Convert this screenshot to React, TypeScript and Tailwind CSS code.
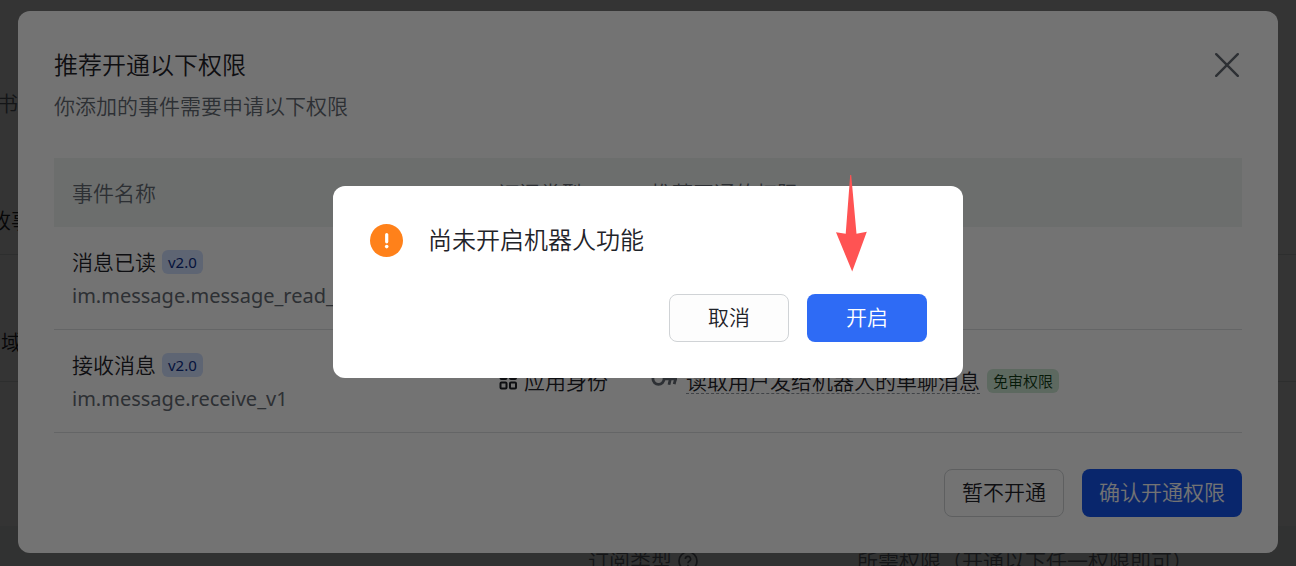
import { ReactNode } from "react";

const events = [
  {
    name: "消息已读",
    version: "v2.0",
    key: "im.message.message_read_v1",
  },
  {
    name: "接收消息",
    version: "v2.0",
    key: "im.message.receive_v1",
    subscription: "应用身份",
    permission: "读取用户发给机器人的单聊消息",
    tag: "免审权限",
  },
];

function AppsIcon() {
  return (
    <svg viewBox="0 0 20 18" className="h-[18px] w-5 shrink-0" fill="none" stroke="#1f2329" strokeWidth="2">
      <rect x="2.5" y="1" width="6" height="6" rx="1" />
      <rect x="12" y="1" width="6" height="6" rx="1" />
      <rect x="2.5" y="10.5" width="6" height="6" rx="1" />
      <rect x="12" y="10.5" width="6" height="6" rx="1" />
    </svg>
  );
}

function KeyIcon() {
  return (
    <svg viewBox="0 0 27 18" className="h-[18px] w-[27px] shrink-0" fill="none" stroke="#646a73" strokeWidth="2.8">
      <circle cx="7.5" cy="6.8" r="5.6" />
      <path d="M13 6.8h13M19.4 6.8l-1.4 6M24.6 6.8l-1.4 5.4" />
    </svg>
  );
}

function CloseIcon() {
  return (
    <svg viewBox="0 0 24 24" className="size-6" fill="none" stroke="#646a73" strokeWidth="2.4" strokeLinecap="round">
      <path d="M1.2 1.2l21.6 21.6M22.8 1.2L1.2 22.8" />
    </svg>
  );
}

function WarningIcon() {
  return (
    <svg viewBox="0 0 33 33" className="size-[33px] shrink-0">
      <circle cx="16.5" cy="16.5" r="16.5" fill="#ff811a" />
      <rect x="15.1" y="9" width="3.2" height="10.4" rx="1.6" fill="#fff" />
      <circle cx="16.7" cy="22.6" r="1.8" fill="#fff" />
    </svg>
  );
}

function Button({ className, children }: { className: string; children: ReactNode }) {
  return (
    <button type="button" className={`h-12 min-w-[120px] rounded-lg px-[17px] text-[21px] ${className}`}>
      {children}
    </button>
  );
}

// settings page that sits under both dialogs
function SettingsPage() {
  return (
    <main className="flex h-screen flex-col overflow-hidden bg-white text-[21px] leading-8">
      <div className="-ml-[41px]">
        <p className="h-[186px] pt-[87px] pl-[17px] text-[#646a73]">飞书</p>
        <p className="h-[69px] border-b border-[#dee0e3] pt-[18px] pl-[10px]">接收事件</p>
        <p className="h-[127px] border-b border-[#dee0e3] pt-[71px]">作用域</p>
      </div>
      <div className="mt-[144px] grid h-[69px] shrink-0 grid-cols-[588px_269px_1fr] items-center bg-[#eff4f2] text-[#646a73]">
        <span />
        <span className="flex items-center gap-1.5">
          订阅类型
          <svg viewBox="0 0 20 20" className="size-5" fill="none" stroke="#646a73" strokeWidth="1.7">
            <circle cx="10" cy="10" r="9" />
            <path d="M7.4 8a2.6 2.6 0 1 1 3.8 2.3c-.8.5-1.2.9-1.2 1.9M10 13.8v1.6" />
          </svg>
        </span>
        <span>所需权限（开通以下任一权限即可）</span>
      </div>
    </main>
  );
}

function PermissionDialog() {
  return (
    <div className="fixed inset-0 bg-black/55 px-[18px] pt-[11px]">
      <section role="dialog" aria-labelledby="permission-title" className="rounded-xl bg-white p-9">
        <header className="flex items-start justify-between">
          <div>
            <h2 id="permission-title" className="text-2xl leading-9">
              推荐开通以下权限
            </h2>
            <p className="mt-[7px] text-[21px] leading-8 text-[#646a73]">你添加的事件需要申请以下权限</p>
          </div>
          <button type="button" aria-label="关闭" className="mt-1.5 mr-[3px]">
            <CloseIcon />
          </button>
        </header>

        <table className="mt-9 w-full table-fixed border-separate border-spacing-0 text-left text-[21px] leading-8">
          <thead className="bg-[#eff4f2] text-[#646a73]">
            <tr className="h-[69px]">
              <th className="w-[426px] px-[18px] font-[350]">事件名称</th>
              <th className="w-[153px] px-[18px] font-[350]">订阅类型</th>
              <th className="px-[18px] font-[350]">推荐开通的权限</th>
            </tr>
          </thead>
          <tbody>
            {events.map((event) => (
              <tr key={event.key} className="h-[103px]">
                <td className="border-b border-[#dee0e3] px-[18px] pt-0.5">
                  <div className="flex items-center gap-1.5">
                    {event.name}
                    <span className="rounded-md bg-[#d1dfff] px-1.5 text-[15px] leading-6 font-normal text-[#0c2e86]">
                      {event.version}
                    </span>
                  </div>
                  <div className="mt-0.5 text-xl leading-8 font-normal text-[#646a73]">{event.key}</div>
                </td>
                <td className="border-b border-[#dee0e3] px-[18px]">
                  {event.subscription && (
                    <div className="flex items-center gap-1.5 whitespace-nowrap">
                      <AppsIcon />
                      {event.subscription}
                    </div>
                  )}
                </td>
                <td className="border-b border-[#dee0e3] px-[18px]">
                  {event.permission && (
                    <div className="flex items-center">
                      <KeyIcon />
                      <span className="ml-2 border-b border-dashed border-[#8f959e] leading-6">{event.permission}</span>
                      <span className="ml-[7px] rounded-md bg-[#cfe8d6] px-1.5 text-[15px] leading-6 text-[#0e3a12]">
                        {event.tag}
                      </span>
                    </div>
                  )}
                </td>
              </tr>
            ))}
          </tbody>
        </table>

        <footer className="mt-9 flex justify-end gap-[18px]">
          <Button className="border border-[#d0d3d6]">暂不开通</Button>
          <Button className="bg-[#1456f0] text-white">确认开通权限</Button>
        </footer>
      </section>
    </div>
  );
}

function ConfirmDialog() {
  return (
    <div className="fixed inset-0 bg-black/55 pt-[186px]">
      <section
        role="alertdialog"
        aria-labelledby="confirm-title"
        className="relative mx-auto max-w-[630px] rounded-xl bg-white p-9"
      >
        <div className="flex items-center gap-[25px] pl-px">
          <WarningIcon />
          <h2 id="confirm-title" className="text-2xl leading-9">
            尚未开启机器人功能
          </h2>
        </div>
        <div className="mt-9 flex justify-end gap-[18px]">
          <Button className="border border-[#d0d3d6] bg-[#fdfdfd]">取消</Button>
          <Button className="bg-[#2e6bf5] text-white">开启</Button>
        </div>
        <svg viewBox="0 0 32 97" className="absolute -top-[11px] right-[95px] h-[97px] w-8">
          <path d="M14.2 0h1l5.3 58.8 10.3-2L16.2 96.6 0 57.2l9.7 1.6z" fill="#ff5353" />
        </svg>
      </section>
    </div>
  );
}

export default function App() {
  return (
    <div className="font-['Noto_Sans','Noto_Sans_CJK_SC',sans-serif] font-[350] text-[#1f2329]">
      <SettingsPage />
      <PermissionDialog />
      <ConfirmDialog />
    </div>
  );
}
